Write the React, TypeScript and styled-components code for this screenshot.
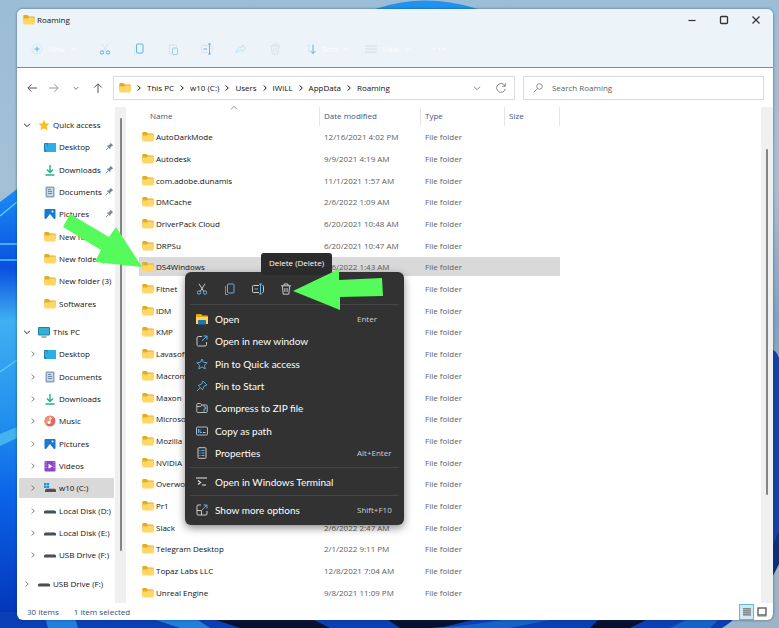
import React from "react";
import styled, { createGlobalStyle, css } from "styled-components";

const GlobalStyle = createGlobalStyle`
  * { box-sizing: border-box; }
  body { margin: 0; font-family: "Open Sans", "Noto Sans", sans-serif; font-size: 8px; line-height: 12px; color: #111; }
  button, input { font: inherit; color: inherit; }
  button { border: 0; padding: 0; background: none; white-space: nowrap; }
  ul, ol { list-style: none; margin: 0; padding: 0; }
  svg { display: block; flex: none; }
`;

/* ---------- icons ---------- */

type Glyph =
  | "folder" | "star" | "desktop" | "download" | "document" | "picture" | "pc" | "music" | "video"
  | "windrive" | "drive" | "pin" | "right" | "down" | "up" | "back" | "forward" | "upArrow" | "refresh"
  | "search" | "min" | "max" | "close" | "plus" | "cut" | "copy" | "paste" | "rename" | "share" | "trash"
  | "sort" | "view" | "more" | "openFolder" | "external" | "starLine" | "pinLine" | "zip" | "path"
  | "props" | "terminal" | "expand" | "details" | "large";

const B = "#5fb2e6";
const glyphs: Record<Glyph, React.ReactNode> = {
  folder: <><path d="M.3 2q0-1 1-1h3.200l1.500 1.500h4.700q1 0 1 1V8H.3z" fill="#e5ac1f" /><path d="M.3 4.500h4.500l1.200-1h4.700q1 0 1 1V9.500q0 1-1 1H1.300q-1 0-1-1z" fill="#ffd767" /></>,
  star: <path d="M6 .8l1.600 3.500 3.800.4-2.800 2.600.8 3.900L6 9.300l-3.400 1.900.8-3.900L.6 4.700l3.800-.4z" fill="#fdc116" />,
  desktop: <><rect x="0" y="2" width="12" height="9" rx="1" fill="#1582b8" /><path d="M4 2h7q1 0 1 1v7q0 1-1 1H2z" fill="#2cafe2" /><path d="M1.500 4h1M1.500 6h1M1.500 8h1" stroke="#fff" /></>,
  download: <path d="M6 1v7M3 5.500L6 8.500l3-3M1.500 11h9" stroke="#1db58b" strokeWidth="1.400" fill="none" />,
  document: <><rect x="1.500" y=".5" width="9" height="11" rx="1" fill="#8ea3bb" /><rect x="3" y="2" width="6" height="8" fill="#c8d7e8" /><path d="M4 3.500h3M4 5.500h4M4 7.500h4" stroke="#6d8bb0" /></>,
  picture: <><rect x=".5" y="1" width="11" height="10" rx="1" fill="#137bd1" /><path d="M2 11l4-5 4 5z" fill="#fff" /><circle cx="8.500" cy="3.500" r="1" fill="#fff" /></>,
  pc: <><rect x="0" y="1" width="12" height="8.500" rx="1" fill="#1686ad" /><rect x="1" y="2" width="10" height="6.500" fill="#36afd3" /><path d="M3.500 11h5" stroke="#718996" strokeWidth="1.300" /></>,
  music: <><circle cx="6" cy="6" r="5.500" fill="#df6964" /><path d="M1 4a5.500 5.500 0 0 0 1 6l7-8a5.500 5.500 0 0 0-8 2z" fill="#ed956f" /><circle cx="5" cy="7.500" r="1.500" fill="#fff" /><path d="M6 7.500v-5l2 1.500" stroke="#fff" fill="none" /></>,
  video: <><rect x=".5" y="1" width="11" height="10.500" rx="1" fill="#8b45c9" /><path d="M1.500 2.500h1M1.500 5h1M1.500 7.500h1M9.500 2.500h1M9.500 5h1M9.500 7.500h1" stroke="#d8b7ef" /><path d="M4.500 3.700v5L8.500 6.200z" fill="#fff" /></>,
  windrive: <><path d="M0 1h2.300v2.300H0zM2.800 1h2.300v2.300H2.800zM0 3.800h2.300V6H0zM2.800 3.800h2.300V6H2.800z" fill="#1a93dc" /><path d="M1 8l1-1.300h9L12 8v2H1z" fill="#4d5459" /></>,
  drive: <><path d="M1.500 5h9L12 6.500H0z" fill="#9a9da0" /><rect x="0" y="6" width="12" height="2.500" rx=".5" fill="#4b4f53" /></>,
  pin: <g transform="rotate(45 6 6)"><path d="M4 1h4L7.500 5 9 7H3l1.500-2z" fill="#75899c" /><path d="M6 7v4.500" stroke="#75899c" /></g>,
  right: <path d="M4.500 3l3 3-3 3" stroke="currentColor" strokeWidth="1.200" fill="none" />,
  down: <path d="M2.500 4.500L6 8l3.500-3.500" stroke="currentColor" strokeWidth="1.200" fill="none" />,
  up: <path d="M2.500 7.500L6 4l3.500 3.500" stroke="currentColor" fill="none" />,
  back: <path d="M11 6H2M5.500 2.300L1.800 6l3.700 3.700" stroke="currentColor" fill="none" />,
  forward: <path d="M1 6h9M6.500 2.300L10.200 6 6.500 9.700" stroke="currentColor" fill="none" />,
  upArrow: <path d="M6 11V2M2.300 5.500L6 1.800l3.700 3.700" stroke="currentColor" fill="none" />,
  refresh: <path d="M10 4a4.400 4.400 0 1 0 .3 3M10.300 1.200V4.300H7.200" stroke="currentColor" fill="none" />,
  search: <><circle cx="7.500" cy="4.500" r="2.800" stroke="currentColor" strokeWidth=".9" fill="none" /><path d="M5.400 6.600L1.800 10.200" stroke="currentColor" strokeWidth=".9" /></>,
  min: <path d="M2.500 6.500h7" stroke="currentColor" strokeWidth="1.200" />,
  max: <rect x="2.500" y="2.500" width="7" height="7" rx="1" stroke="currentColor" strokeWidth="1.300" fill="none" />,
  close: <path d="M2.500 2.500l7 7M9.500 2.500l-7 7" stroke="currentColor" strokeWidth="1.200" />,
  plus: <><circle cx="6" cy="6" r="5" stroke="#cfe6f5" strokeWidth=".8" fill="none" /><path d="M6 3.500v5M3.500 6h5" stroke={B} /></>,
  cut: <><path d="M3 .8l5 8M9 .8L4 8.800" stroke="currentColor" fill="none" /><circle cx="3" cy="9.500" r="1.700" stroke={B} fill="none" /><circle cx="9" cy="9.500" r="1.700" stroke={B} fill="none" /></>,
  copy: <><path d="M4 11.500h-2.500V3" stroke="currentColor" opacity=".6" fill="none" /><rect x="3.500" y="1" width="6.500" height="9" rx="1" stroke={B} fill="none" /></>,
  paste: <><path d="M9.500 4V2h-7v9H5M4.500 2h3" stroke="currentColor" fill="none" /><rect x="5.500" y="5" width="5" height="6.500" rx="1" stroke={B} opacity=".55" fill="none" /></>,
  rename: <><path d="M7 2.500H1.500q-1 0-1 1v5q0 1 1 1H7M10 2.500h.5q1 0 1 1v5q0 1-1 1H10" stroke="currentColor" fill="none" /><path d="M8.500 1v10M7 1h3M7 11h3M2.500 6H6" stroke={B} /></>,
  share: <path d="M7 2l4 3.500L7 9V7Q3 7 1 10q0-5 6-6z" stroke="#b9dff5" strokeWidth=".8" fill="none" />,
  trash: <path d="M1 2.800h10M4 2.800V1h4v1.800M2.300 3l.9 8.200h5.600L9.700 3M4.900 5v4M7.100 5v4" stroke="currentColor" fill="none" />,
  sort: <><path d="M4 10.500V1.500L1.500 4" stroke="#d5e5f0" fill="none" /><path d="M8 1.500v9M5.500 8L8 10.500 10.500 8" stroke={B} fill="none" /></>,
  view: <path d="M0 3h12M0 6h12M0 9h12" stroke="#dbe3e9" strokeWidth="1.500" />,
  more: <path d="M.5 6h1.600M5.200 6h1.600M9.900 6h1.600" stroke="currentColor" strokeWidth="1.600" />,
  openFolder: <><path d="M0 2q0-1 1-1h4l1.500 1.500H11q1 0 1 1V11H0z" fill="#e6a716" /><path d="M0 4h12v7H0z" fill="#ffd45b" /><path d="M3 7h6q1 0 1 1v3.500H2V8q0-1 1-1z" fill="#1c75b8" /></>,
  external: <><path d="M6 1.500H2.500q-1.500 0-1.500 1.500v6.500Q1 11 2.500 11H9q1.500 0 1.500-1.500V7" stroke="#c9c9c9" fill="none" /><path d="M6 6l5-5M7.500 1H11v3.500" stroke={B} fill="none" /></>,
  starLine: <path d="M6 1l1.500 3.300 3.700.4-2.800 2.500.8 3.600L6 9l-3.200 1.800.8-3.600L.8 4.700l3.700-.4z" stroke={B} strokeWidth=".9" fill="none" />,
  pinLine: <path d="M7 1l4 4-3 1.300-1.500 3.500L2.200 5.500 5.700 4zM4.300 7.700L1 11" stroke={B} strokeWidth=".9" fill="none" />,
  zip: <><path d="M.8 9.500V2.500q0-1 1-1h2.700L6 3h4.200q1 0 1 1v5.500q0 1-1 1H1.800q-1 0-1-1zM.8 4.500h4L6 3" stroke="#c9c9c9" strokeWidth=".9" fill="none" /><path d="M8 3v2h1.500v2H8v3.500" stroke={B} fill="none" /></>,
  path: <><rect x=".5" y="2" width="11" height="8" rx="1" stroke="#aebbc4" fill="none" /><path d="M2.500 4v4M4 4.500v3h2" stroke={B} fill="none" /><path d="M7 7.500h2.500" stroke="#c9c9c9" /></>,
  props: <><rect x="2" y=".7" width="8" height="10.600" rx="1" stroke="#c9c9c9" fill="none" /><path d="M3.500 3.500h1M3.500 6h1M3.500 8.500h1M5.500 3.500h3M5.500 6h3M5.500 8.500h3" stroke={B} /></>,
  terminal: <path d="M0 2h11M2 4.500l2.500 2L2 8.500M6 9h4" stroke="#e5e5e5" strokeWidth="1.200" fill="none" />,
  expand: <><path d="M5 1H2Q1 1 1 2v8q0 1 1 1h8q1 0 1-1V7M1 6.500h4.500V11" stroke="#c9c9c9" fill="none" /><path d="M6 6l5-5M7.500 1H11v3.500" stroke={B} fill="none" /></>,
  details: <><rect x="2" y="2" width="8" height="8" fill="#a5abae" /><path d="M2 2.500h8M2 4.500h8M2 6.500h8M2 8.500h8" stroke="#858b8e" /></>,
  large: <><rect x="2" y="2" width="8" height="7" stroke="#555" strokeWidth="1.300" fill="#fff" /><path d="M1.500 10h9" stroke="#777" /></>,
};

const Icon = ({ name, size = 12 }: { name: Glyph; size?: number }) => (
  <svg width={size} height={size} viewBox="0 0 12 12" aria-hidden="true">{glyphs[name]}</svg>
);

/* ---------- shell ---------- */

const Desktop = styled.div`
  position: relative;
  display: flex;
  min-height: 100vh;
  padding: 9px 6px 8px 17px;
  background: #8fb3cf;
  overflow: hidden;
`;
const Wallpaper = styled.svg`
  position: absolute;
  inset: 0;
  width: 100%;
  height: 100%;
`;
const Window = styled.main`
  position: relative;
  flex: 1;
  min-width: 0;
  display: flex;
  flex-direction: column;
  border-radius: 6px;
  background: #fff;
  box-shadow: 0 0 3px rgba(20, 50, 90, 0.6);
`;
const Chrome = styled.header`
  border-radius: 6px 6px 0 0;
  background: #ecf3f9;
  border-bottom: 1px solid #7f8a92;
`;
const TitleBar = styled.div`
  display: flex;
  align-items: center;
  height: 22px;
  padding: 0 1px 0 6px;
`;
const Title = styled.h1`
  flex: 1;
  margin: 0 0 0 2px;
  font-size: 8px;
  font-weight: 400;
`;
const CaptionButton = styled.button`
  display: grid;
  place-items: center;
  width: 32px;
  height: 22px;
  color: #333;
`;
const Toolbar = styled.div`
  display: flex;
  align-items: center;
  height: 36px;
  padding-left: 1px;
  color: #fff;
`;
const ToolButton = styled.button`
  display: grid;
  place-items: center;
  width: 34px;
  height: 24px;
  color: #dbe3e9;
`;
const ToolMenuButton = styled.button<{ $width: number }>`
  display: flex;
  align-items: center;
  gap: 5px;
  width: ${(p) => p.$width}px;
  height: 24px;
  padding-left: 13px;
`;
const MoreButton = styled(ToolButton)`
  color: #fff;
`;

/* ---------- address row ---------- */

const AddressRow = styled.div`
  display: grid;
  grid-template-columns: 88px 5fr 3fr;
  column-gap: 8px;
  align-items: center;
  height: 39px;
  padding-right: 9px;
`;
const History = styled.nav`
  display: flex;
  padding-left: 4px;
`;
const HistoryButton = styled.button<{ $muted?: boolean }>`
  display: grid;
  place-items: center;
  flex: none;
  width: 22px;
  height: 20px;
  color: ${(p) => (p.$muted ? "#999" : "#555")};
`;
const AddressBar = styled.div`
  display: flex;
  align-items: center;
  height: 24px;
  padding: 0 1px 0 5px;
  border: 1px solid #dcdcdc;
`;
const Crumbs = styled.ol`
  flex: 1;
  display: flex;
  align-items: center;
`;
const Crumb = styled.li`
  display: flex;
  align-items: center;
  svg { margin: 0 3px; }
`;
const BarButton = styled.button`
  display: grid;
  place-items: center;
  width: 24px;
  height: 20px;
  color: #858585;
`;
const SearchBox = styled.label`
  display: flex;
  align-items: center;
  gap: 8px;
  height: 24px;
  padding: 0 8px;
  border: 1px solid #dcdcdc;
  color: #858585;
  input {
    flex: 1;
    min-width: 0;
    border: 0;
    padding: 0;
    outline: 0;
    background: none;
  }
  input::placeholder { color: #5f5f5f; opacity: 1; }
`;

/* ---------- body ---------- */

const Body = styled.div`
  flex: 1;
  display: flex;
`;
const Sidebar = styled.nav`
  width: 98px;
  display: flex;
  padding: 7px 1px 8px 2px;
`;
const Tree = styled.ul`
  flex: 1;
  min-width: 0;
  display: flex;
  flex-direction: column;
`;
const TreeRow = styled.li<{ $group?: boolean }>`
  flex: 1;
  min-height: 20px;
  display: flex;
  align-items: center;
  ${(p) => p.$group && css`&:not(:first-child) { margin-top: 6px; }`}
`;
const TreeButton = styled.button<{ $level: number; $selected?: boolean }>`
  flex: 1;
  min-width: 0;
  display: flex;
  align-items: center;
  height: 20px;
  padding-left: ${(p) => (p.$level ? 9 : 3)}px;
  background: ${(p) => (p.$selected ? "#d9d9d9" : "none")};
`;
const Twisty = styled.span<{ $open?: boolean }>`
  width: 12px;
  height: 10px;
  margin-right: 4px;
  color: ${(p) => (p.$open ? "#222" : "#777")};
`;
const TreeLabel = styled.span`
  flex: 1;
  margin-left: 3px;
  text-align: left;
`;
const ScrollTrack = styled.div<{ $before: number; $after: number; $end?: boolean }>`
  display: flex;
  justify-content: center;
  width: ${(p) => (p.$end ? 12 : 11)}px;
  padding: ${(p) => p.$before}px 0 ${(p) => p.$after}px;
  background: #f0f0f0;
  &::before {
    content: "";
    width: 2px;
    border-radius: 1px;
    background: #858585;
  }
`;
const FilePane = styled.section`
  flex: 1;
  min-width: 0;
  display: flex;
  padding-left: 13px;
`;
const FileTable = styled.table`
  flex: 1;
  display: grid;
  grid-template-rows: 19px;
  grid-auto-rows: minmax(20px, 1fr);
  thead, tbody { display: contents; }
`;
const FileRow = styled.tr<{ $selected?: boolean }>`
  display: grid;
  grid-template-columns: 181px 101px 84px 55px;
  justify-content: start;
  align-items: center;
  td { color: #606060; padding: 1px 0 0 4px; }
  ${(p) => p.$selected && css`td { height: 19px; padding-top: 4px; background: #d9d9d9; }`}
`;
const HeadCell = styled.th<{ $first?: boolean }>`
  position: relative;
  height: 19px;
  padding: 3px 0 0 ${(p) => (p.$first ? 11 : 4)}px;
  border-right: 1px solid #e5e5e5;
  font-weight: 400;
  text-align: left;
  color: #3f5380;
`;
const SortMark = styled.span`
  position: absolute;
  top: -4px;
  left: 50%;
  color: #777;
`;
const NameCell = styled.td`
  && { color: #111; padding-left: 3px; }
`;
const FileName = styled.span`
  display: flex;
  align-items: center;
  gap: 2px;
  white-space: nowrap;
`;
const StatusBar = styled.footer`
  display: flex;
  align-items: center;
  gap: 15px;
  height: 17px;
  padding: 0 4px 0 10px;
  color: #2f4e78;
`;
const ViewSwitch = styled.div`
  display: flex;
  margin-left: auto;
`;
const ViewButton = styled.button<{ $active?: boolean }>`
  display: grid;
  place-items: center;
  width: 15px;
  height: 16px;
  border: 1px solid ${(p) => (p.$active ? "#62b8d8" : "transparent")};
  background: ${(p) => (p.$active ? "#cdeaf5" : "none")};
`;

/* ---------- overlays ---------- */

const ContextMenu = styled.div`
  position: absolute;
  left: 168px;
  top: 263px;
  width: 219px;
  padding: 1px 5px 2px;
  border-radius: 6px;
  background: #323232;
  color: #fff;
  box-shadow: 0 3px 8px rgba(0, 0, 0, 0.45);
`;
const QuickRow = styled.div`
  display: flex;
  height: 32px;
  border-bottom: 1px solid #454545;
`;
const QuickButton = styled.button`
  display: grid;
  place-items: center;
  width: 28px;
  color: #c9c9c9;
  &:first-child { width: 24px; margin-right: 2px; }
`;
const MenuGroup = styled.ul<{ $tall?: boolean }>`
  display: grid;
  grid-auto-rows: 1fr;
  min-height: ${(p) => (p.$tall ? 162 : 28)}px;
  padding: 3px 0;
  & + & { border-top: 1px solid #454545; }
`;
const MenuItem = styled.button`
  display: flex;
  align-items: center;
  gap: 7px;
  width: 100%;
  height: 100%;
  padding: 0 6px;
  font-family: Lato, "Open Sans", sans-serif;
  font-size: 10px;
`;
const Shortcut = styled.kbd`
  width: 36px;
  margin-left: auto;
  font-family: "Open Sans", "Noto Sans", sans-serif;
  font-size: 8px;
  text-align: left;
  color: #d0d0d0;
`;
const Tooltip = styled.div`
  position: absolute;
  left: 244px;
  top: 244px;
  width: 71px;
  padding: 4px 0 6px;
  border-radius: 3px;
  background: #2b2b2b;
  color: #fff;
  text-align: center;
  white-space: nowrap;
`;
const Arrows = styled.svg`
  position: absolute;
  left: 46px;
  top: 204px;
  pointer-events: none;
`;

/* ---------- data ---------- */

type Node = { label: string; icon: Glyph; level: 0 | 1; open?: boolean; twisty?: boolean; pinned?: boolean; selected?: boolean };
const quick = (label: string, icon: Glyph, pinned = false): Node => ({ label, icon, level: 1, pinned });
const child = (label: string, icon: Glyph, selected = false): Node => ({ label, icon, level: 1, twisty: true, selected });
const tree: Node[] = [
  { label: "Quick access", icon: "star", level: 0, open: true, twisty: true },
  quick("Desktop", "desktop", true),
  quick("Downloads", "download", true),
  quick("Documents", "document", true),
  quick("Pictures", "picture", true),
  quick("New folder", "folder"),
  quick("New folder (2)", "folder"),
  quick("New folder (3)", "folder"),
  quick("Softwares", "folder"),
  { label: "This PC", icon: "pc", level: 0, open: true, twisty: true },
  child("Desktop", "desktop"),
  child("Documents", "document"),
  child("Downloads", "download"),
  child("Music", "music"),
  child("Pictures", "picture"),
  child("Videos", "video"),
  child("w10 (C:)", "windrive", true),
  child("Local Disk (D:)", "drive"),
  child("Local Disk (E:)", "drive"),
  child("USB Drive (F:)", "drive"),
  { label: "USB Drive (F:)", icon: "drive", level: 0, twisty: true },
];

const files: [string, string][] = [
  ["AutoDarkMode", "12/16/2021 4:02 PM"],
  ["Autodesk", "9/9/2021 4:19 AM"],
  ["com.adobe.dunamis", "11/1/2021 1:57 AM"],
  ["DMCache", "2/6/2022 1:09 AM"],
  ["DriverPack Cloud", "6/20/2021 10:48 AM"],
  ["DRPSu", "6/20/2021 10:47 AM"],
  ["DS4Windows", "2/6/2022 1:43 AM"],
  ["Fitnet", ""],
  ["IDM", ""],
  ["KMP", ""],
  ["Lavasoft", ""],
  ["Macromedia", ""],
  ["Maxon", ""],
  ["Microsoft", ""],
  ["Mozilla", ""],
  ["NVIDIA", ""],
  ["Overwolf", ""],
  ["Pr1", ""],
  ["Slack", "2/6/2022 2:47 AM"],
  ["Telegram Desktop", "2/1/2022 9:11 PM"],
  ["Topaz Labs LLC", "12/8/2021 7:04 AM"],
  ["Unreal Engine", "9/8/2021 11:09 PM"],
];

const menu: [Glyph, string, string?][][] = [
  [
    ["openFolder", "Open", "Enter"],
    ["external", "Open in new window"],
    ["starLine", "Pin to Quick access"],
    ["pinLine", "Pin to Start"],
    ["zip", "Compress to ZIP file"],
    ["path", "Copy as path"],
    ["props", "Properties", "Alt+Enter"],
  ],
  [["terminal", "Open in Windows Terminal"]],
  [["expand", "Show more options", "Shift+F10"]],
];

const crumbs = ["This PC", "w10 (C:)", "Users", "IWiLL", "AppData", "Roaming"];

const Bloom = () => (
  <Wallpaper viewBox="0 0 779 628" preserveAspectRatio="none" aria-hidden="true">
    <defs>
      <linearGradient id="sky" x1="0" y1="0" x2="0" y2="1">
        <stop offset="0" stopColor="#9bbdd6" /><stop offset=".3" stopColor="#a5c0d6" />
        <stop offset=".5" stopColor="#7fa5c4" /><stop offset="1" stopColor="#9fb6c9" />
      </linearGradient>
      <linearGradient id="petal" x1="0" y1="0" x2="0" y2="1">
        <stop offset="0" stopColor="#1a8cf5" /><stop offset=".18" stopColor="#0a4fe0" />
        <stop offset=".3" stopColor="#3fb0f2" /><stop offset=".52" stopColor="#2191ee" />
        <stop offset=".7" stopColor="#0a63e8" /><stop offset="1" stopColor="#0330b4" />
      </linearGradient>
    </defs>
    <rect width="779" height="628" fill="url(#sky)" />
    <path d="M375 9Q425-8 478 9z" fill="#2092ef" />
    <path d="M0 202L17 189V628H0z" fill="url(#petal)" />
    <path d="M0 216L17 202M0 244h17M0 260h17M0 372L17 360" stroke="#5cc6fa" strokeWidth="1.500" />
    <path d="M0 434L17 427V438L0 446z" fill="#45b3ee" />
    <path d="M0 612H779V628H0z" fill="#0a3fb5" />
    <path d="M45 618h30l3 10H48zM150 618l30 10h30l-15-10z" fill="#2080dc" />
    <path d="M210 618h100l20 10H240zM385 618h95l-40 10h-40zM600 618h50l-20 10h-40z" fill="#07112f" />
    <path d="M430 628q50-3 80-10h50l-50 10zM670 628l20-10h30l-10 10z" fill="#1762c9" />
    <path d="M773 350q4 2 6 8V548l-6 28z" fill="#1042ac" />
    <path d="M773 545l6-14v33l-6 12z" fill="#0c2f7e" />
    <path d="M722 628q8-5 12-9l39-3v-40l6-10v62z" fill="#9cb4c8" />
  </Wallpaper>
);

export default function App() {
  return (
    <Desktop>
      <GlobalStyle />
      <Bloom />
      <Window>
        <Chrome>
          <TitleBar>
            <Icon name="folder" />
            <Title>Roaming</Title>
            <CaptionButton aria-label="Minimize"><Icon name="min" /></CaptionButton>
            <CaptionButton aria-label="Maximize"><Icon name="max" /></CaptionButton>
            <CaptionButton aria-label="Close"><Icon name="close" /></CaptionButton>
          </TitleBar>
          <Toolbar role="toolbar" aria-label="Commands">
            <ToolMenuButton $width={70}><Icon name="plus" />New<Icon name="down" size={8} /></ToolMenuButton>
            <ToolButton aria-label="Cut"><Icon name="cut" /></ToolButton>
            <ToolButton aria-label="Copy"><Icon name="copy" /></ToolButton>
            <ToolButton aria-label="Paste"><Icon name="paste" /></ToolButton>
            <ToolButton aria-label="Rename"><Icon name="rename" /></ToolButton>
            <ToolButton aria-label="Share"><Icon name="share" /></ToolButton>
            <ToolButton aria-label="Delete"><Icon name="trash" /></ToolButton>
            <ToolMenuButton $width={60}><Icon name="sort" />Sort<Icon name="down" size={8} /></ToolMenuButton>
            <ToolMenuButton $width={70}><Icon name="view" />View<Icon name="down" size={8} /></ToolMenuButton>
            <MoreButton aria-label="More"><Icon name="more" /></MoreButton>
          </Toolbar>
        </Chrome>

        <AddressRow>
          <History aria-label="History">
            <HistoryButton aria-label="Back"><Icon name="back" /></HistoryButton>
            <HistoryButton $muted aria-label="Forward"><Icon name="forward" /></HistoryButton>
            <HistoryButton aria-label="Recent locations"><Icon name="down" size={8} /></HistoryButton>
            <HistoryButton aria-label="Up"><Icon name="upArrow" /></HistoryButton>
          </History>
          <AddressBar>
            <Icon name="folder" />
            <Crumbs>
              {crumbs.map((c) => (
                <Crumb key={c}><Icon name="right" size={10} /><button>{c}</button></Crumb>
              ))}
            </Crumbs>
            <BarButton aria-label="Previous locations"><Icon name="down" size={10} /></BarButton>
            <BarButton aria-label="Refresh"><Icon name="refresh" /></BarButton>
          </AddressBar>
          <SearchBox>
            <Icon name="search" />
            <input type="text" placeholder="Search Roaming" aria-label="Search Roaming" />
          </SearchBox>
        </AddressRow>

        <Body>
          <Sidebar aria-label="Folders">
            <Tree>
              {tree.map((n, i) => (
                <TreeRow key={i} $group={n.level === 0}>
                  <TreeButton $level={n.level} $selected={n.selected}>
                    <Twisty $open={n.open}>{n.twisty && <Icon name={n.open ? "down" : "right"} size={10} />}</Twisty>
                    <Icon name={n.icon} />
                    <TreeLabel>{n.label}</TreeLabel>
                    {n.pinned && <Icon name="pin" size={10} />}
                  </TreeButton>
                </TreeRow>
              ))}
            </Tree>
          </Sidebar>
          <ScrollTrack $before={11} $after={52} />
          <FilePane>
            <FileTable>
              <thead>
                <FileRow>
                  <HeadCell $first>Name<SortMark><Icon name="up" size={10} /></SortMark></HeadCell>
                  <HeadCell>Date modified</HeadCell>
                  <HeadCell>Type</HeadCell>
                  <HeadCell>Size</HeadCell>
                </FileRow>
              </thead>
              <tbody>
                {files.map(([name, date]) => (
                  <FileRow key={name} $selected={name === "DS4Windows"}>
                    <NameCell><FileName><Icon name="folder" />{name}</FileName></NameCell>
                    <td>{date}</td>
                    <td>File folder</td>
                    <td />
                  </FileRow>
                ))}
              </tbody>
            </FileTable>
          </FilePane>
          <ScrollTrack $before={42} $after={108} $end />
        </Body>

        <StatusBar>
          <span>30 items</span>
          <span>1 item selected</span>
          <ViewSwitch>
            <ViewButton $active aria-label="Details view"><Icon name="details" /></ViewButton>
            <ViewButton aria-label="Large icons view"><Icon name="large" /></ViewButton>
          </ViewSwitch>
        </StatusBar>

        <ContextMenu role="menu">
          <QuickRow>
            <QuickButton aria-label="Cut"><Icon name="cut" /></QuickButton>
            <QuickButton aria-label="Copy"><Icon name="copy" /></QuickButton>
            <QuickButton aria-label="Rename"><Icon name="rename" /></QuickButton>
            <QuickButton aria-label="Delete"><Icon name="trash" /></QuickButton>
          </QuickRow>
          {menu.map((group, i) => (
            <MenuGroup key={i} $tall={group.length > 1}>
              {group.map(([icon, label, key]) => (
                <li key={label}>
                  <MenuItem role="menuitem">
                    <Icon name={icon} />{label}{key && <Shortcut>{key}</Shortcut>}
                  </MenuItem>
                </li>
              ))}
            </MenuGroup>
          ))}
        </ContextMenu>
        <Tooltip role="tooltip">Delete (Delete)</Tooltip>
        <Arrows width="322" height="98" viewBox="0 0 322 98" aria-hidden="true">
          <path d="M7 1L46 24 53 14 79 54 32 49 38 37 0 14z" fill="#54fb5a" />
          <path d="M230 78L276 56V67L319 65 320 83 277 84V97z" fill="#54fb5a" />
        </Arrows>
      </Window>
    </Desktop>
  );
}
